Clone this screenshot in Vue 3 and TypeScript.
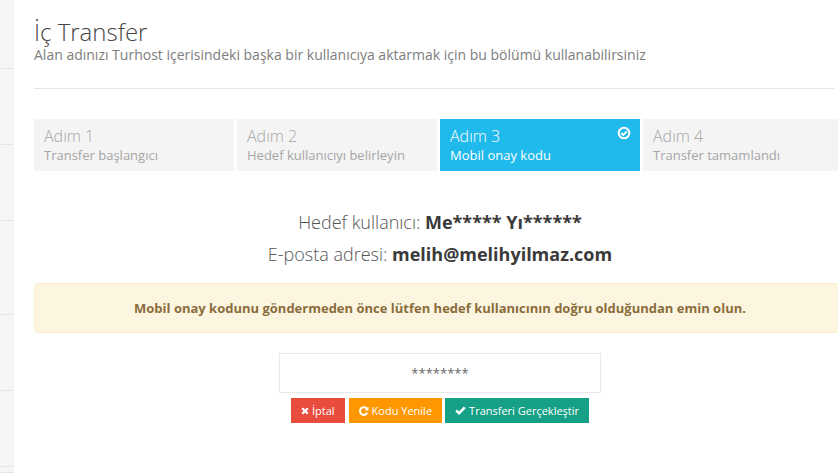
<script setup lang="ts">
interface Step {
  title: string
  desc: string
  active?: boolean
}

const steps: Step[] = [
  { title: 'Adım 1', desc: 'Transfer başlangıcı' },
  { title: 'Adım 2', desc: 'Hedef kullanıcıyı belirleyin' },
  { title: 'Adım 3', desc: 'Mobil onay kodu', active: true },
  { title: 'Adım 4', desc: 'Transfer tamamlandı' }
]

const sideRows = [69, 76, 76, 94, 76, 76, 6]
</script>

<template>
  <div class="page">
    <aside class="side">
      <div v-for="(h, i) in sideRows" :key="i" class="side-row" :style="{ height: h + 'px' }"></div>
    </aside>
    <main class="main">
      <h1>İç Transfer</h1>
      <p class="sub">Alan adınızı Turhost içerisindeki başka bir kullanıcıya aktarmak için bu bölümü kullanabilirsiniz</p>
      <hr />
      <div class="steps">
        <div v-for="s in steps" :key="s.title" class="step" :class="{ active: s.active }">
          <div class="step-title">{{ s.title }}</div>
          <div class="step-desc">{{ s.desc }}</div>
          <svg v-if="s.active" class="step-check" viewBox="0 0 14 14" width="14" height="14">
            <circle cx="7" cy="7" r="5.3" fill="none" stroke="#fff" stroke-width="2" />
            <path d="M4.3 7 6.3 9 9.8 5.3" fill="none" stroke="#fff" stroke-width="1.9" />
          </svg>
        </div>
      </div>
      <div class="info">Hedef kullanıcı: <b>Me***** Yı******</b></div>
      <div class="info second">E-posta adresi: <b>melih@melihyilmaz.com</b></div>
      <div class="alert">Mobil onay kodunu göndermeden önce lütfen hedef kullanıcının doğru olduğundan emin olun.</div>
      <div class="code">********</div>
      <div class="buttons">
        <button class="btn red">
          <svg viewBox="0 0 10 10" width="8" height="8"><path d="M1.5 1.5 8.5 8.5M8.5 1.5 1.5 8.5" fill="none" stroke="#fff" stroke-width="2.9" /></svg>
          İptal
        </button>
        <button class="btn orange">
          <svg viewBox="0 0 12 12" width="10" height="10"><path d="M9.6 3.4A4.6 4.6 0 1 0 10 8" fill="none" stroke="#fff" stroke-width="2.4" /><path d="M11.4 0.6V5.4H6.6Z" fill="#fff" /></svg>
          Kodu Yenile
        </button>
        <button class="btn green">
          <svg viewBox="0 0 12 10" width="11" height="9"><path d="M1.2 5 4.4 8 10.8 1.6" fill="none" stroke="#fff" stroke-width="2.8" /></svg>
          Transferi Gerçekleştir
        </button>
      </div>
    </main>
  </div>
</template>

<style scoped>
.page {
  display: flex;
  width: 838px;
  height: 473px;
  overflow: hidden;
  background: #fff;
  font-family: "Open Sans", sans-serif;
  color: #666;
}

.side {
  flex: 0 0 14px;
  background: #f6f6f6;
}

.side-row {
  box-sizing: border-box;
  border-bottom: 1px solid #e6e6e6;
}

.main {
  flex: 0 0 812px;
  margin-left: 20px;
  text-align: center;
}

h1 {
  margin: 15px 0 0;
  font-size: 24px;
  line-height: 33px;
  font-weight: 300;
  color: #444;
  text-align: left;
}

.sub {
  margin: -3px 0 0;
  font-size: 14px;
  line-height: 19px;
  color: #7d7d7d;
  text-align: left;
}

hr {
  width: 800px;
  margin: 24px 0 0;
  border: 0;
  border-top: 1px solid #e5e5e5;
}

.steps {
  display: grid;
  grid-template-columns: repeat(4, 200px);
  gap: 3px;
  margin-top: 30px;
  text-align: left;
}

.step {
  position: relative;
  box-sizing: border-box;
  height: 52px;
  padding: 7px 10px 0;
  background: #f4f4f4;
  color: #a6a6a6;
}

.step.active {
  background: #1fb9ec;
  color: #fff;
}

.step-title {
  font-size: 16px;
  line-height: 20px;
  font-weight: 300;
}

.step-desc {
  margin-top: 1px;
  font-size: 13px;
  line-height: 17px;
}

.step-check {
  position: absolute;
  top: 7px;
  right: 9px;
}

.info {
  margin-top: 39px;
  font-size: 18px;
  line-height: 25px;
  font-weight: 300;
  color: #555;
}

.info b {
  font-weight: 700;
  color: #3a3a3a;
}

.info.second {
  margin-top: 7px;
}

.alert {
  box-sizing: border-box;
  height: 50px;
  margin-top: 16px;
  border: 1px solid #faebcc;
  border-radius: 4px;
  background: #fcf6e1;
  color: #8a6d3b;
  font-size: 13px;
  font-weight: 700;
  line-height: 48px;
}

.code {
  box-sizing: border-box;
  width: 322px;
  height: 40px;
  margin: 20px auto 0;
  border: 1px solid #e9e9e9;
  color: #666;
  font-size: 13px;
  line-height: 38px;
}

.buttons {
  display: flex;
  justify-content: center;
  gap: 4px;
  margin-top: 5px;
}

.btn {
  display: flex;
  align-items: center;
  gap: 3px;
  height: 25px;
  padding: 0 10px;
  border: 0;
  color: #fff;
  font-family: inherit;
  font-size: 11px;
  font-weight: 400;
}

.red {
  background: #e84c3d;
}

.orange {
  background: #ff9800;
}

.green {
  margin-left: -1px;
  background: #16a085;
}
</style>
